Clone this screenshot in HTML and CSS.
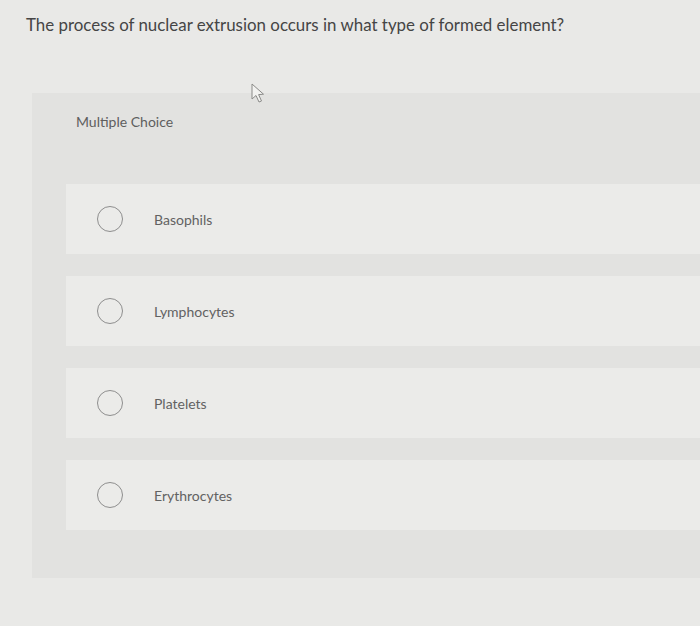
FILE: index.html
```html
<!DOCTYPE html>
<html>
<head>
<meta charset="utf-8">
<link rel="stylesheet" href="styles.css">
</head>
<body>
<main class="page">
  <p class="question">The process of nuclear extrusion occurs in what type of formed element?</p>
  <section class="panel">
    <svg class="cursor" width="16" height="22" viewBox="0 0 16 22"><path d="M1 1 L1 16 L5 12.5 L8 19 L10.5 18 L7.6 11.6 L12.5 11.2 Z" fill="#f2f2f0" stroke="#8a8a88" stroke-width="1"/></svg>
    <div class="label">Multiple Choice</div>
    <ul class="options">
      <li class="option"><span class="radio"></span><span class="text">Basophils</span></li>
      <li class="option"><span class="radio"></span><span class="text">Lymphocytes</span></li>
      <li class="option"><span class="radio"></span><span class="text">Platelets</span></li>
      <li class="option"><span class="radio"></span><span class="text">Erythrocytes</span></li>
    </ul>
  </section>
</main>
</body>
</html>
```
FILE: styles.css
```css
html, body {
  margin: 0;
  padding: 0;
}
body {
  background: #e9e9e7;
  font-family: Lato, "Open Sans", sans-serif;
  width: 700px;
  height: 626px;
  overflow: hidden;
}
.page {
  padding-top: 14px;
}
.question {
  margin: 0 0 0 26px;
  font-size: 16.9px;
  line-height: 22px;
  color: #454545;
}
.panel {
  position: relative;
  margin: 57px 0 0 32px;
  height: 485px;
  background: #e2e2e0;
  padding: 20px 0 0 0;
  box-sizing: border-box;
}
.cursor {
  position: absolute;
  left: 219px;
  top: -10px;
}
.label {
  margin-left: 44px;
  font-size: 14px;
  line-height: 18px;
  color: #5e5e5e;
}
.options {
  list-style: none;
  margin: 53px 0 0 34px;
  padding: 0;
  display: flex;
  flex-direction: column;
  gap: 22px;
}
.option {
  height: 70px;
  background: #ebebe9;
  display: flex;
  align-items: center;
  padding-left: 31px;
}
.radio {
  width: 26px;
  height: 26px;
  border: 1.5px solid #8e8e8e;
  border-radius: 50%;
  box-sizing: border-box;
  flex: none;
}
.text {
  margin-left: 31px;
  font-size: 14px;
  color: #626262;
}
```
